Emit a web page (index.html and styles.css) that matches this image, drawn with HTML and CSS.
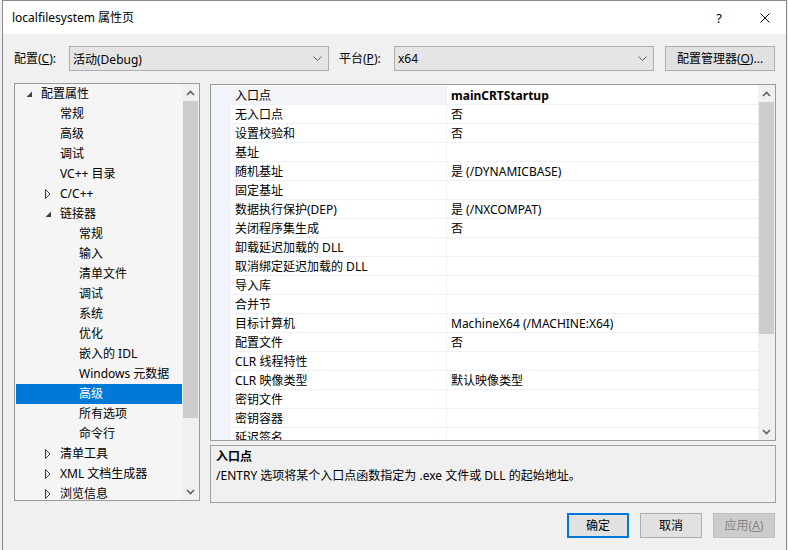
FILE: index.html
```html
<!DOCTYPE html>
<html lang="zh-CN">
<head>
<meta charset="utf-8">
<title>localfilesystem 属性页</title>
<link rel="stylesheet" href="styles.css">
</head>
<body>
<div class="window">
  <div class="titlebar">
    <span class="title">localfilesystem 属性页</span>
    <span class="tb-help">?</span>
    <svg class="tb-close" width="10" height="10" viewBox="0 0 10 10"><path d="M0.5 0.5L9.5 9.5M9.5 0.5L0.5 9.5" stroke="#000" stroke-width="1" fill="none"/></svg>
  </div>
  <div class="content">
    <div class="config-row">
      <span class="lbl">配置(<u>C</u>):</span>
      <div class="combo"><span>活动(Debug)</span><svg width="9" height="5" viewBox="0 0 9 5"><path d="M0.5 0.5L4.5 4.5L8.5 0.5" stroke="#606060" fill="none"/></svg></div>
      <span class="lbl lbl2">平台(<u>P</u>):</span>
      <div class="combo"><span>x64</span><svg width="9" height="5" viewBox="0 0 9 5"><path d="M0.5 0.5L4.5 4.5L8.5 0.5" stroke="#606060" fill="none"/></svg></div>
      <button class="btn cfgmgr">配置管理器(<u>O</u>)...</button>
    </div>
    <div class="main">
      <div class="tree-box">
        <div class="tree">
          <div class="node l0"><span class="tw"><svg width="7" height="7" viewBox="0 0 7 7"><path d="M6 0.5V6H0.5Z" fill="#404040"/></svg></span><span>配置属性</span></div>
          <div class="node l1"><span class="tw"></span><span>常规</span></div>
          <div class="node l1"><span class="tw"></span><span>高级</span></div>
          <div class="node l1"><span class="tw"></span><span>调试</span></div>
          <div class="node l1"><span class="tw"></span><span>VC++ 目录</span></div>
          <div class="node l1"><span class="tw"><svg width="6" height="10" viewBox="0 0 6 10"><path d="M0.5 0.5L5 5L0.5 9.5Z" fill="none" stroke="#404040"/></svg></span><span>C/C++</span></div>
          <div class="node l1"><span class="tw"><svg width="7" height="7" viewBox="0 0 7 7"><path d="M6 0.5V6H0.5Z" fill="#404040"/></svg></span><span>链接器</span></div>
          <div class="node l2"><span class="tw"></span><span>常规</span></div>
          <div class="node l2"><span class="tw"></span><span>输入</span></div>
          <div class="node l2"><span class="tw"></span><span>清单文件</span></div>
          <div class="node l2"><span class="tw"></span><span>调试</span></div>
          <div class="node l2"><span class="tw"></span><span>系统</span></div>
          <div class="node l2"><span class="tw"></span><span>优化</span></div>
          <div class="node l2"><span class="tw"></span><span>嵌入的 IDL</span></div>
          <div class="node l2"><span class="tw"></span><span>Windows 元数据</span></div>
          <div class="node l2 selected"><span class="tw"></span><span>高级</span></div>
          <div class="node l2"><span class="tw"></span><span>所有选项</span></div>
          <div class="node l2"><span class="tw"></span><span>命令行</span></div>
          <div class="node l1"><span class="tw"><svg width="6" height="10" viewBox="0 0 6 10"><path d="M0.5 0.5L5 5L0.5 9.5Z" fill="none" stroke="#404040"/></svg></span><span>清单工具</span></div>
          <div class="node l1"><span class="tw"><svg width="6" height="10" viewBox="0 0 6 10"><path d="M0.5 0.5L5 5L0.5 9.5Z" fill="none" stroke="#404040"/></svg></span><span>XML 文档生成器</span></div>
          <div class="node l1"><span class="tw"><svg width="6" height="10" viewBox="0 0 6 10"><path d="M0.5 0.5L5 5L0.5 9.5Z" fill="none" stroke="#404040"/></svg></span><span>浏览信息</span></div>
        </div>
        <div class="vscroll tree-scroll">
          <div class="arrow"><svg width="9" height="6" viewBox="0 0 9 6"><path d="M1 5L4.5 1.5L8 5" stroke="#606060" stroke-width="1.6" fill="none"/></svg></div>
          <div class="track"><div class="thumb"></div></div>
          <div class="arrow"><svg width="9" height="6" viewBox="0 0 9 6"><path d="M1 1L4.5 4.5L8 1" stroke="#606060" stroke-width="1.6" fill="none"/></svg></div>
        </div>
      </div>
      <div class="right">
        <div class="grid-box">
          <div class="grid">
            <div class="row first"><span class="gut"></span><span class="name">入口点</span><span class="val bold">mainCRTStartup</span></div>
            <div class="row"><span class="gut"></span><span class="name">无入口点</span><span class="val">否</span></div>
            <div class="row"><span class="gut"></span><span class="name">设置校验和</span><span class="val">否</span></div>
            <div class="row"><span class="gut"></span><span class="name">基址</span><span class="val"></span></div>
            <div class="row"><span class="gut"></span><span class="name">随机基址</span><span class="val">是 (/DYNAMICBASE)</span></div>
            <div class="row"><span class="gut"></span><span class="name">固定基址</span><span class="val"></span></div>
            <div class="row"><span class="gut"></span><span class="name">数据执行保护(DEP)</span><span class="val">是 (/NXCOMPAT)</span></div>
            <div class="row"><span class="gut"></span><span class="name">关闭程序集生成</span><span class="val">否</span></div>
            <div class="row"><span class="gut"></span><span class="name">卸载延迟加载的 DLL</span><span class="val"></span></div>
            <div class="row"><span class="gut"></span><span class="name">取消绑定延迟加载的 DLL</span><span class="val"></span></div>
            <div class="row"><span class="gut"></span><span class="name">导入库</span><span class="val"></span></div>
            <div class="row"><span class="gut"></span><span class="name">合并节</span><span class="val"></span></div>
            <div class="row"><span class="gut"></span><span class="name">目标计算机</span><span class="val">MachineX64 (/MACHINE:X64)</span></div>
            <div class="row"><span class="gut"></span><span class="name">配置文件</span><span class="val">否</span></div>
            <div class="row"><span class="gut"></span><span class="name">CLR 线程特性</span><span class="val"></span></div>
            <div class="row"><span class="gut"></span><span class="name">CLR 映像类型</span><span class="val">默认映像类型</span></div>
            <div class="row"><span class="gut"></span><span class="name">密钥文件</span><span class="val"></span></div>
            <div class="row"><span class="gut"></span><span class="name">密钥容器</span><span class="val"></span></div>
            <div class="row"><span class="gut"></span><span class="name">延迟签名</span><span class="val"></span></div>
          </div>
          <div class="vscroll grid-scroll">
            <div class="arrow"><svg width="9" height="6" viewBox="0 0 9 6"><path d="M1 5L4.5 1.5L8 5" stroke="#606060" stroke-width="1.6" fill="none"/></svg></div>
            <div class="track"><div class="thumb"></div></div>
            <div class="arrow"><svg width="9" height="6" viewBox="0 0 9 6"><path d="M1 1L4.5 4.5L8 1" stroke="#606060" stroke-width="1.6" fill="none"/></svg></div>
          </div>
        </div>
        <div class="desc">
          <div class="desc-title">入口点</div>
          <div class="desc-text">/ENTRY 选项将某个入口点函数指定为 .exe 文件或 DLL 的起始地址。</div>
        </div>
        <div class="buttons">
          <button class="btn dlg default">确定</button>
          <button class="btn dlg">取消</button>
          <button class="btn dlg disabled">应用(<u>A</u>)</button>
        </div>
      </div>
    </div>
  </div>
</div>
</body>
</html>
```
FILE: styles.css
```css
* { box-sizing: border-box; }
html, body {
  margin: 0;
  padding: 0;
  background: #f0f0f0;
}
body {
  font-family: "Noto Sans", "Noto Sans CJK SC", sans-serif;
  font-size: 12px;
  color: #000;
  width: 788px;
  height: 550px;
  overflow: hidden;
}
.window {
  margin-left: 2px;
  width: 785px;
  height: 551px;
  border: 1px solid #8a8a8a;
  border-bottom: none;
  background: #f0f0f0;
}
.titlebar {
  height: 33px;
  background: #fff;
  display: flex;
  align-items: center;
  padding-left: 9px;
}
.title {
  flex: 1;
  line-height: 16px;
  margin-top: 1px;
}
.tb-help {
  font-size: 13px;
  margin-right: 38px;
  line-height: 14px;
}
.tb-close {
  margin-right: 16px;
}
.content {
  padding: 12px 9px 0 11px;
}
.config-row {
  display: flex;
  align-items: center;
  height: 25px;
}
.lbl {
  width: 55px;
  line-height: 16px;
}
.lbl2 {
  margin-left: 10px;
}
.combo {
  width: 260px;
  height: 25px;
  background: #e5e5e5;
  border: 1px solid #adadad;
  display: flex;
  align-items: center;
  justify-content: space-between;
  padding: 0 6px 0 3px;
}
.btn {
  font: inherit;
  color: #000;
  background: #e1e1e1;
  border: 1px solid #adadad;
  padding: 0;
  height: 25px;
  line-height: 16px;
}
.cfgmgr {
  width: 110px;
  margin-left: 11px;
}
.main {
  display: flex;
  margin-top: 12px;
  gap: 10px;
  align-items: flex-start;
}
.tree-box {
  width: 186px;
  height: 418px;
  border: 1px solid #9a9a9a;
  background: #f5f5f5;
  display: flex;
  overflow: hidden;
}
.tree {
  flex: 1;
  padding-left: 1px;
  overflow: hidden;
}
.node {
  height: 20px;
  line-height: 20px;
  display: flex;
  align-items: center;
  white-space: nowrap;
}
.node.l0 { padding-left: 7px; }
.node.l1 { padding-left: 26px; }
.node.l2 { padding-left: 45px; }
.tw {
  width: 18px;
  height: 20px;
  display: flex;
  align-items: center;
  padding-left: 3px;
}
.node.selected {
  background: #0078d7;
  color: #fff;
}
.vscroll {
  width: 17px;
  background: #f0f0f0;
  display: flex;
  flex-direction: column;
}
.arrow {
  height: 17px;
  display: flex;
  align-items: center;
  justify-content: center;
}
.track {
  flex: 1;
  padding: 0 1px;
}
.thumb {
  background: #cdcdcd;
}
.tree-scroll .thumb { height: 317px; }
.grid-scroll .thumb { height: 232px; }
.right {
  width: 566px;
  display: flex;
  flex-direction: column;
}
.grid-box {
  margin-top: 1px;
  height: 357px;
  border: 1px solid #9a9a9a;
  background: #fff;
  display: flex;
  overflow: hidden;
}
.grid {
  flex: 1;
  overflow: hidden;
  padding-top: 1px;
}
.row {
  display: flex;
  height: 19px;
}
.gut {
  width: 20px;
  background: #f1f4fa;
}
.name, .val {
  height: 19px;
  border-bottom: 1px solid #eef1f7;
  line-height: 20px;
  white-space: nowrap;
  overflow: hidden;
}
.name {
  width: 215px;
  padding-left: 4px;
}
.val {
  flex: 1;
  border-left: 1px solid #eef1f7;
  padding-left: 4px;
}
.row.first .name { background: #f3f4f7; }
.bold { font-weight: bold; }
.desc {
  margin-top: 4px;
  height: 58px;
  border: 1px solid #a0a0a0;
  padding: 1px 5px;
}
.desc-title {
  font-weight: bold;
  line-height: 19px;
}
.desc-text {
  line-height: 19px;
}
.buttons {
  margin-top: 10px;
  display: flex;
  justify-content: flex-end;
  gap: 11px;
  padding-right: 1px;
}
.dlg {
  width: 62px;
}
.dlg.default {
  border: 2px solid #0078d7;
}
.dlg.disabled {
  background: #cccccc;
  border-color: #bfbfbf;
  color: #838383;
}
```
